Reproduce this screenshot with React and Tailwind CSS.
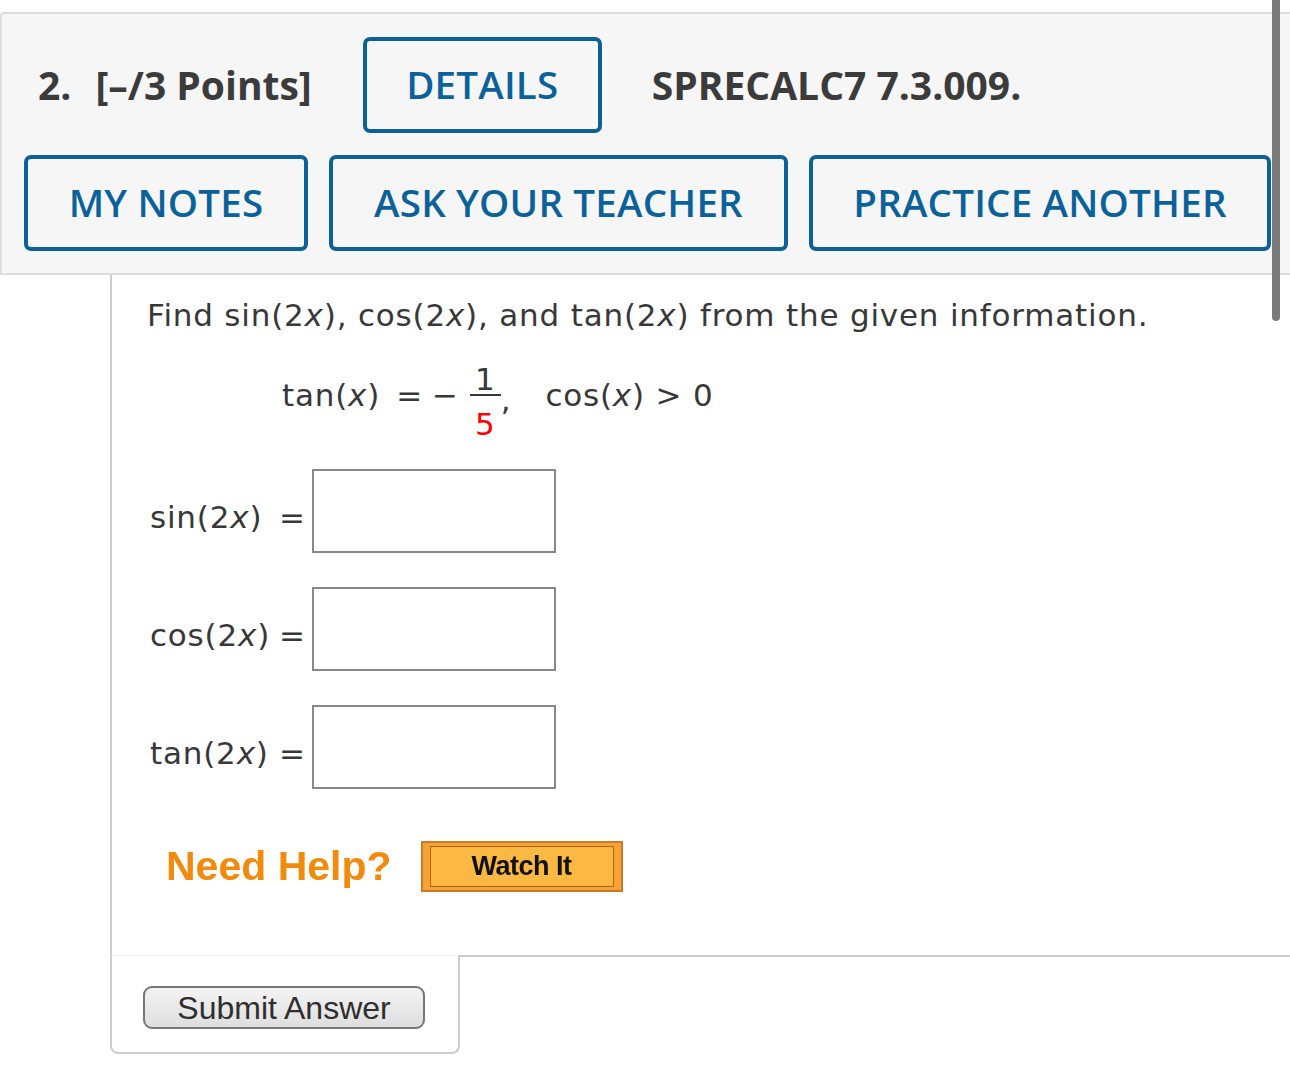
import React from "react"

const blueBtn =
  "flex items-center justify-center h-[96px] border-[4px] border-[#0b629b] rounded-[7px] text-[#0b629b] text-[38.5px] font-semibold tracking-[0.2px]"

function Label({ children }) {
  return <span className="whitespace-nowrap">{children}</span>
}

function AnswerRow({ fn }) {
  return (
    <div className="flex items-center h-[84px]">
      <div className="w-[132px] pl-[3px] mt-[12px] whitespace-nowrap">
        {fn}(2<i>x</i>)
      </div>
      <div className="w-[33px] mt-[12px]">=</div>
      <div className="w-[244px] h-[84px] border-2 border-[#888888] bg-white"></div>
    </div>
  )
}

export default function App() {
  return (
    <div className="relative w-[1290px] h-[1085px] bg-white overflow-hidden">
      {/* scrollbar thumb */}
      <div className="absolute right-[10px] top-0 w-[8px] h-[321px] bg-[#7b7b7b] rounded-b-[4px]" />

      {/* question header */}
      <div className="mt-[12px] w-[1300px] h-[263px] bg-[#f6f6f6] border-2 border-[#dddddd] rounded-tl-[4px] font-['Open_Sans',sans-serif]">
        <div className="flex items-center pt-[23px] pl-[36px] h-[119px]">
          <span className="text-[39px] font-bold text-[#3b3b3b]">2.</span>
          <span className="ml-[24px] text-[39px] font-bold text-[#3b3b3b]">[–/3 Points]</span>
          <div className={blueBtn + " ml-[51px] w-[239px]"}>DETAILS</div>
          <span className="ml-[50px] text-[39px] font-bold text-[#3b3b3b]">SPRECALC7 7.3.009.</span>
        </div>
        <div className="flex gap-[21px] mt-[22px] pl-[22px]">
          <div className={blueBtn + " w-[284px]"}>MY NOTES</div>
          <div className={blueBtn + " w-[459px]"}>ASK YOUR TEACHER</div>
          <div className={blueBtn + " w-[462px]"}>PRACTICE ANOTHER</div>
        </div>
      </div>

      {/* question body */}
      <div className="ml-[110px] font-['DejaVu_Sans',Verdana,sans-serif] text-[#383838]">
        <div className="h-[680px] border-l-2 border-[#cccccc] pl-[35px] pt-[21px] text-[31px] tracking-[0.8px]">
          <p className="leading-[38px]">
            Find sin(2<i>x</i>), cos(2<i>x</i>), and tan(2<i>x</i>) from the given information.
          </p>

          <div className="flex items-center ml-[135px] mt-[15px] h-[92px]">
            <Label>
              tan(<i>x</i>)
            </Label>
            <span className="ml-[16px]">=</span>
            <span className="ml-[9px]">−</span>
            <span className="ml-[11px] inline-flex flex-col items-center">
              <span className="leading-[30px] pt-[15px] px-[2px]">1</span>
              <span className="w-[31px] h-[2px] bg-[#383838]" />
              <span className="leading-[34px] pt-[11px] text-[#ff0000]">5</span>
            </span>
            <span className="mt-[8px]">,</span>
            <span className="ml-[34px]">
              cos(<i>x</i>) &gt; 0
            </span>
          </div>

          <div className="flex flex-col gap-[34px] mt-[28px]">
            <AnswerRow fn="sin" />
            <AnswerRow fn="cos" />
            <AnswerRow fn="tan" />
          </div>

          <div className="flex items-center mt-[47px] ml-[19px]">
            <span className="font-['Liberation_Sans',Arial,sans-serif] font-bold text-[41px] tracking-normal text-[#f28a0c] blur-[0.6px]">
              Need Help?
            </span>
            <div className="ml-[29px] w-[202px] h-[51px] border-2 border-[#c97a2c] bg-[#f7a233] px-[7px] py-[4px]">
              <div className="h-full border border-[#a8681e] bg-[#fbb944] flex items-center justify-center font-['Liberation_Sans',Arial,sans-serif] font-bold text-[27px] text-[#111111] tracking-[-0.5px] scale-y-[1.05]">
                Watch It
              </div>
            </div>
          </div>
        </div>

        <div className="flex">
          <div className="w-[350px] h-[99px] border-l-2 border-r-2 border-b-2 border-t border-[#cccccc] border-t-[#f2f2f2] rounded-b-[8px] pl-[31px] pt-[30px]">
            <div className="w-[282px] h-[43px] rounded-[9px] border-2 border-[#777777] bg-gradient-to-b from-[#f4f4f4] to-[#dedede] flex items-center justify-center font-['Liberation_Sans',Arial,sans-serif] text-[32px] text-[#2e2e2e]">
              Submit Answer
            </div>
          </div>
          <div className="flex-1 border-t-2 border-[#cccccc]" />
        </div>
      </div>
    </div>
  )
}
